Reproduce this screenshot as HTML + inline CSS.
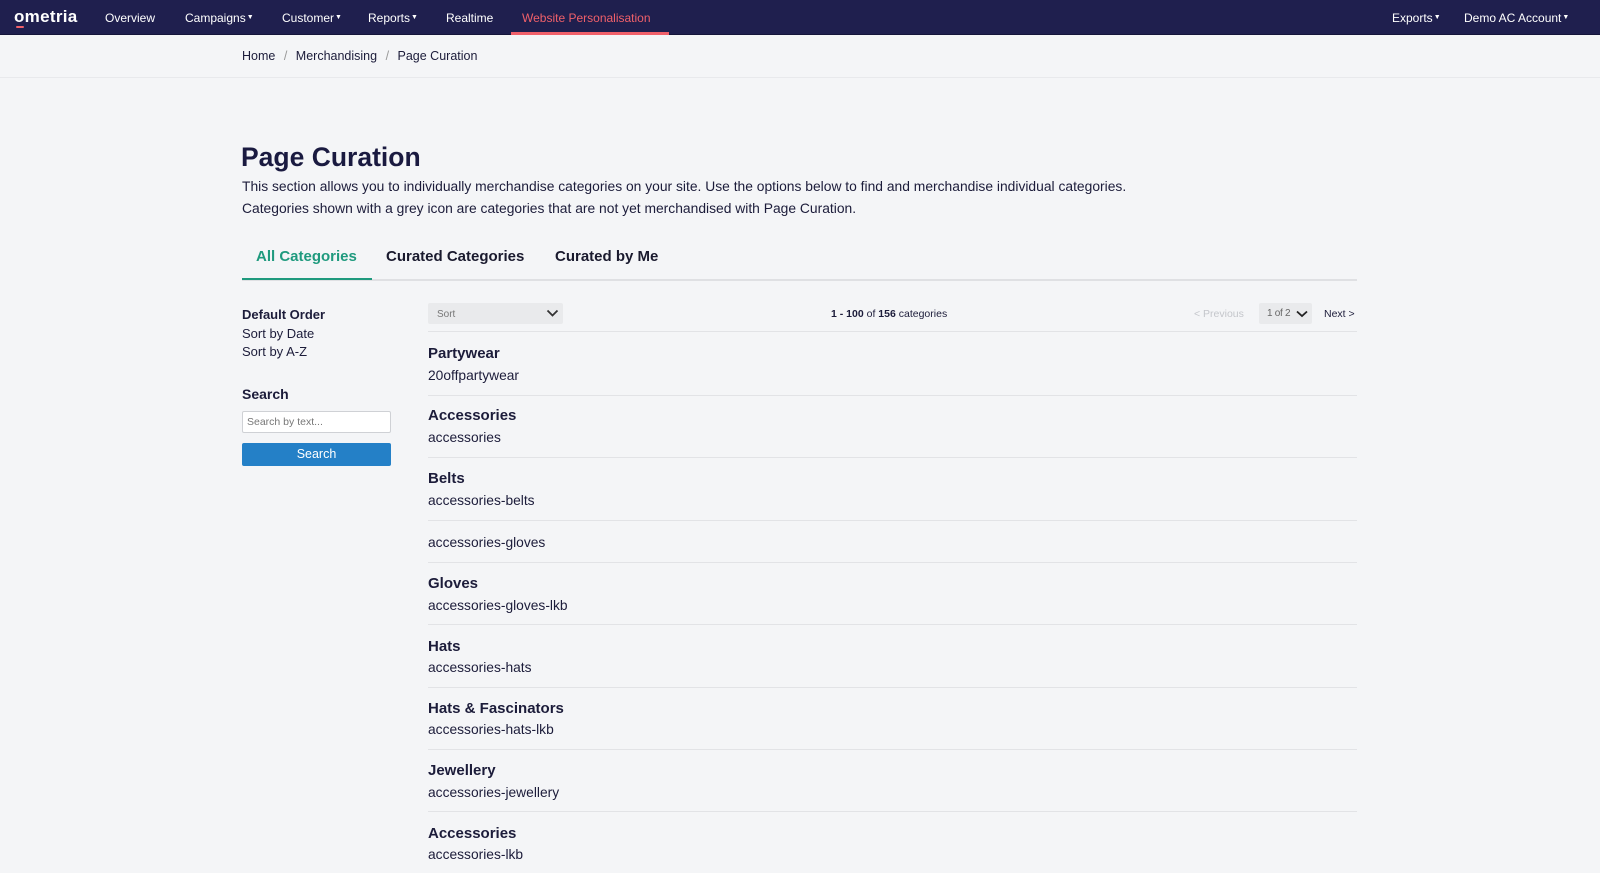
<!DOCTYPE html>
<html><head><meta charset="utf-8"><style>
*{margin:0;padding:0;box-sizing:border-box}
body{width:1600px;height:873px;overflow:hidden;background:#f4f5f7;font-family:"Liberation Sans",sans-serif;color:#1c1c3a;position:relative}
.a{position:absolute;white-space:nowrap}
.nav{position:absolute;left:0;top:0;width:1600px;height:35px;background:#1f1f4e;border-bottom:1px solid #15153a}
.nav .a{color:#fff;font-size:12px;top:11px}
.car{font-size:7px;vertical-align:3px;margin-left:1px}
.bc{font-size:12.5px;top:49px;color:#1c1c3a}
.sep{position:absolute;left:428px;width:929px;height:1px;background:#e2e3e6}
.t{font-size:15px;font-weight:bold;left:428px}
.s{font-size:13.8px;left:428px}
</style></head><body>
<div class="nav">
<div class="a" style="left:14px;top:7px;font-size:17px;font-weight:bold;letter-spacing:0.3px">ometria</div>
<div style="position:absolute;left:16px;top:26px;width:8px;height:2px;background:#f0606a;border-radius:1px"></div>
<div class="a" style="left:105px">Overview</div>
<div class="a" style="left:185px">Campaigns<span class="car">▼</span></div>
<div class="a" style="left:282px">Customer<span class="car">▼</span></div>
<div class="a" style="left:368px">Reports<span class="car">▼</span></div>
<div class="a" style="left:446px">Realtime</div>
<div class="a" style="left:522px;color:#f0606a">Website Personalisation</div>
<div style="position:absolute;left:511px;top:32px;width:158px;height:3px;background:#f0606a"></div>
<div class="a" style="left:1392px">Exports<span class="car">▼</span></div>
<div class="a" style="left:1464px">Demo AC Account<span class="car">▼</span></div>
</div>
<div class="a bc" style="left:242px">Home <span style="color:#999;margin:0 5px">/</span> Merchandising <span style="color:#999;margin:0 5px">/</span> Page Curation</div>
<div style="position:absolute;left:0;top:77px;width:1600px;height:1px;background:#e8e9ec"></div>

<div class="a" style="left:241px;top:142px;font-size:26.5px;font-weight:bold;color:#1a1a40">Page Curation</div>
<div class="a" style="left:242px;top:178px;font-size:13.85px">This section allows you to individually merchandise categories on your site. Use the options below to find and merchandise individual categories.</div>
<div class="a" style="left:242px;top:200px;font-size:13.85px">Categories shown with a grey icon are categories that are not yet merchandised with Page Curation.</div>

<div class="a" style="left:256px;top:248px;font-size:15px;font-weight:bold;color:#1f9a7e">All Categories</div>
<div class="a" style="left:386px;top:248px;font-size:15px;font-weight:bold;color:#1a1a2e">Curated Categories</div>
<div class="a" style="left:555px;top:248px;font-size:15px;font-weight:bold;color:#1a1a2e">Curated by Me</div>
<div style="position:absolute;left:242px;top:279px;width:1115px;height:2px;background:#dfe0e3"></div>
<div style="position:absolute;left:242px;top:278px;width:130px;height:2px;background:#1f9a7e"></div>

<div class="a" style="left:242px;top:307px;font-size:13px;font-weight:bold">Default Order</div>
<div class="a" style="left:242px;top:326px;font-size:13px">Sort by Date</div>
<div class="a" style="left:242px;top:344px;font-size:13px">Sort by A-Z</div>
<div class="a" style="left:242px;top:386px;font-size:14px;font-weight:bold">Search</div>
<div style="position:absolute;left:242px;top:411px;width:149px;height:22px;background:#fff;border:1px solid #cfd1d5;border-radius:2px"></div>
<div class="a" style="left:247px;top:416px;font-size:10.5px;color:#777">Search by text...</div>
<div style="position:absolute;left:242px;top:443px;width:149px;height:23px;background:#2480c7;border-radius:2px;color:#fff;font-size:12.5px;text-align:center;line-height:23px">Search</div>

<div style="position:absolute;left:428px;top:303px;width:135px;height:21px;background:#e9eaec;border-radius:2px"></div>
<div class="a" style="left:437px;top:309px;font-size:10px;color:#777">Sort</div>
<svg class="a" style="left:546px;top:309px" width="13" height="9" viewBox="0 0 13 9"><path d="M1.5 1.5 L6.5 6.5 L11.5 1.5" fill="none" stroke="#333" stroke-width="1.8"/></svg>
<div class="a" style="left:831px;top:308px;font-size:10.5px"><b>1 - 100</b> of <b>156</b> categories</div>
<div class="a" style="left:1194px;top:308px;font-size:10.5px;color:#c4c6cb">&lt; Previous</div>
<div style="position:absolute;left:1259px;top:303px;width:53px;height:21px;background:#e9eaec;border-radius:2px"></div>
<div class="a" style="left:1267px;top:308px;font-size:10px;color:#666;letter-spacing:-0.3px">1 of 2</div>
<svg class="a" style="left:1296px;top:310px" width="12" height="8" viewBox="0 0 12 8"><path d="M1 1.5 L6 6 L11 1.5" fill="none" stroke="#222" stroke-width="1.8"/></svg>
<div class="a" style="left:1324px;top:308px;font-size:10.5px">Next &gt;</div>

<div class="sep" style="top:331px"></div>
<div class="a t" style="top:345px">Partywear</div><div class="a s" style="top:368px">20offpartywear</div>
<div class="sep" style="top:395px"></div>
<div class="a t" style="top:407px">Accessories</div><div class="a s" style="top:430px">accessories</div>
<div class="sep" style="top:457px"></div>
<div class="a t" style="top:470px">Belts</div><div class="a s" style="top:493px">accessories-belts</div>
<div class="sep" style="top:520px"></div>
<div class="a s" style="top:535px">accessories-gloves</div>
<div class="sep" style="top:562px"></div>
<div class="a t" style="top:575px">Gloves</div><div class="a s" style="top:598px">accessories-gloves-lkb</div>
<div class="sep" style="top:624px"></div>
<div class="a t" style="top:638px">Hats</div><div class="a s" style="top:660px">accessories-hats</div>
<div class="sep" style="top:687px"></div>
<div class="a t" style="top:700px">Hats &amp; Fascinators</div><div class="a s" style="top:722px">accessories-hats-lkb</div>
<div class="sep" style="top:749px"></div>
<div class="a t" style="top:762px">Jewellery</div><div class="a s" style="top:785px">accessories-jewellery</div>
<div class="sep" style="top:811px"></div>
<div class="a t" style="top:825px">Accessories</div><div class="a s" style="top:847px">accessories-lkb</div>
</body></html>
